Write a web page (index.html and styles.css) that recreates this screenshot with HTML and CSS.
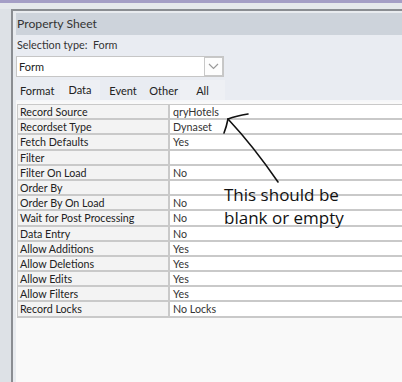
FILE: index.html
```html
<!DOCTYPE html>
<html>
<head>
<meta charset="utf-8">
<link rel="stylesheet" href="styles.css">
</head>
<body>
<div class="top-strip"></div>
<div class="top-gap"></div>
<div class="main">
  <div class="gutter"></div>
  <div class="window">
    <div class="panel">
      <div class="header">Property Sheet</div>
      <div class="seltype">Selection type:&nbsp; Form</div>
      <div class="combo">
        <span class="combo-text">Form</span>
        <span class="combo-btn"><svg width="11" height="7" viewBox="0 0 11 7"><path d="M1 1 L5.5 5.5 L10 1" fill="none" stroke="#9a9a9a" stroke-width="1.2"/></svg></span>
      </div>
      <div class="tabs">
        <span class="tab t-format">Format</span>
        <span class="tab t-data">Data</span>
        <span class="tab t-event">Event</span>
        <span class="tab t-other">Other</span>
        <span class="tab t-all">All</span>
      </div>
      <div class="body">
        <div class="grid">
          <div class="lbl">Record Source</div><div class="val">qryHotels</div>
          <div class="lbl">Recordset Type</div><div class="val">Dynaset</div>
          <div class="lbl">Fetch Defaults</div><div class="val">Yes</div>
          <div class="lbl">Filter</div><div class="val"></div>
          <div class="lbl">Filter On Load</div><div class="val">No</div>
          <div class="lbl">Order By</div><div class="val"></div>
          <div class="lbl">Order By On Load</div><div class="val">No</div>
          <div class="lbl">Wait for Post Processing</div><div class="val">No</div>
          <div class="lbl">Data Entry</div><div class="val">No</div>
          <div class="lbl">Allow Additions</div><div class="val">Yes</div>
          <div class="lbl">Allow Deletions</div><div class="val">Yes</div>
          <div class="lbl">Allow Edits</div><div class="val">Yes</div>
          <div class="lbl">Allow Filters</div><div class="val">Yes</div>
          <div class="lbl">Record Locks</div><div class="val">No Locks</div>
        </div>
        <div class="note">This should be<br>blank or empty</div>
        <svg class="arrow" width="402" height="382" viewBox="0 0 402 382">
          <path d="M228 119 C 242 134, 256 150, 278 182" fill="none" stroke="#111" stroke-width="1.6" stroke-linecap="round"/>
          <path d="M228 119 C 236 116, 242 115, 248 114" fill="none" stroke="#111" stroke-width="1.6" stroke-linecap="round"/>
          <path d="M228 119 C 227 124, 226 128, 224 133" fill="none" stroke="#111" stroke-width="1.6" stroke-linecap="round"/>
        </svg>
      </div>
    </div>
  </div>
</div>
</body>
</html>
```

FILE: styles.css
```css
html, body {
  margin: 0;
  padding: 0;
}
body {
  width: 402px;
  height: 382px;
  overflow: hidden;
  background: #e4e7eb;
  font-family: "Lato", "Open Sans", sans-serif;
  color: #222;
}
.top-strip {
  height: 3px;
  background: #a59ec6;
}
.top-gap {
  height: 6px;
  background: #e6e8ec;
}
.main {
  display: flex;
  height: 373px;
}
.gutter {
  width: 11px;
  background: #dde1e6;
  flex: none;
}
.window {
  flex: 1;
  border-left: 2px solid #8a8d92;
  border-top: 2px solid #8a8d92;
  padding: 2px 0 0 3px;
  background: #e8ebef;
  display: flex;
}
.panel {
  flex: 1;
  display: flex;
  flex-direction: column;
  background: #e9ecf2;
  position: relative;
}
.header {
  height: 22px;
  background: #cdd3db;
  font-size: 12.2px;
  line-height: 22px;
  padding-left: 1px;
  color: #333;
}
.seltype {
  height: 20px;
  line-height: 20px;
  font-size: 10.8px;
  padding-left: 1px;
  color: #333;
}
.combo {
  margin-top: 1px;
  width: 206px;
  height: 19px;
  background: #fff;
  border: 1px solid #c6c6c6;
  display: flex;
  align-items: center;
  justify-content: space-between;
}
.combo-text {
  font-size: 11px;
  padding-left: 2px;
  color: #222;
}
.combo-btn {
  width: 17px;
  height: 17px;
  border: 1px solid #c8c8c8;
  display: flex;
  align-items: center;
  justify-content: center;
  background: #fdfdfd;
}
.tabs {
  margin-top: 3px;
  height: 20px;
  display: flex;
  font-size: 11px;
  border-bottom: 2px solid #f6f7f9;
}
.tab {
  line-height: 22px;
  color: #222;
  text-align: center;
  flex: none;
}
.t-format { width: 40px; padding-left: 4px; text-align: left; }
.t-data { width: 40px; line-height: 19px; background: #eef0f4; }
.t-event { width: 40px; padding-left: 3px; }
.t-other { width: 35px; padding-right: 2px; text-align: right; }
.t-all { width: 45px; background: #eef0f4; }
.body {
  flex: 1;
  background: #f9f9f9;
  padding-top: 2px;
}
.grid {
  display: grid;
  grid-template-columns: 152px 1fr;
  border-top: 1px solid #c9c9c9;
  border-left: 1px solid #c9c9c9;
  margin-left: 1px;
}
.lbl, .val {
  height: 13.2px;
  line-height: 13px;
  font-size: 10.7px;
  border-bottom: 2px solid #c9c9c9;
  white-space: nowrap;
  overflow: hidden;
}
.lbl {
  background: #f3f3f3;
  padding-left: 2px;
  border-right: 2px solid #c9c9c9;
  color: #222;
}
.val {
  background: #fff;
  padding-left: 3px;
  color: #333;
}
.note {
  position: absolute;
  left: 208px;
  top: 170px;
  font-family: "Open Sans", "Noto Sans", sans-serif;
  font-size: 17px;
  line-height: 23px;
  color: #111;
}
.arrow {
  position: absolute;
  left: -16px;
  top: -13px;
  pointer-events: none;
}
```
